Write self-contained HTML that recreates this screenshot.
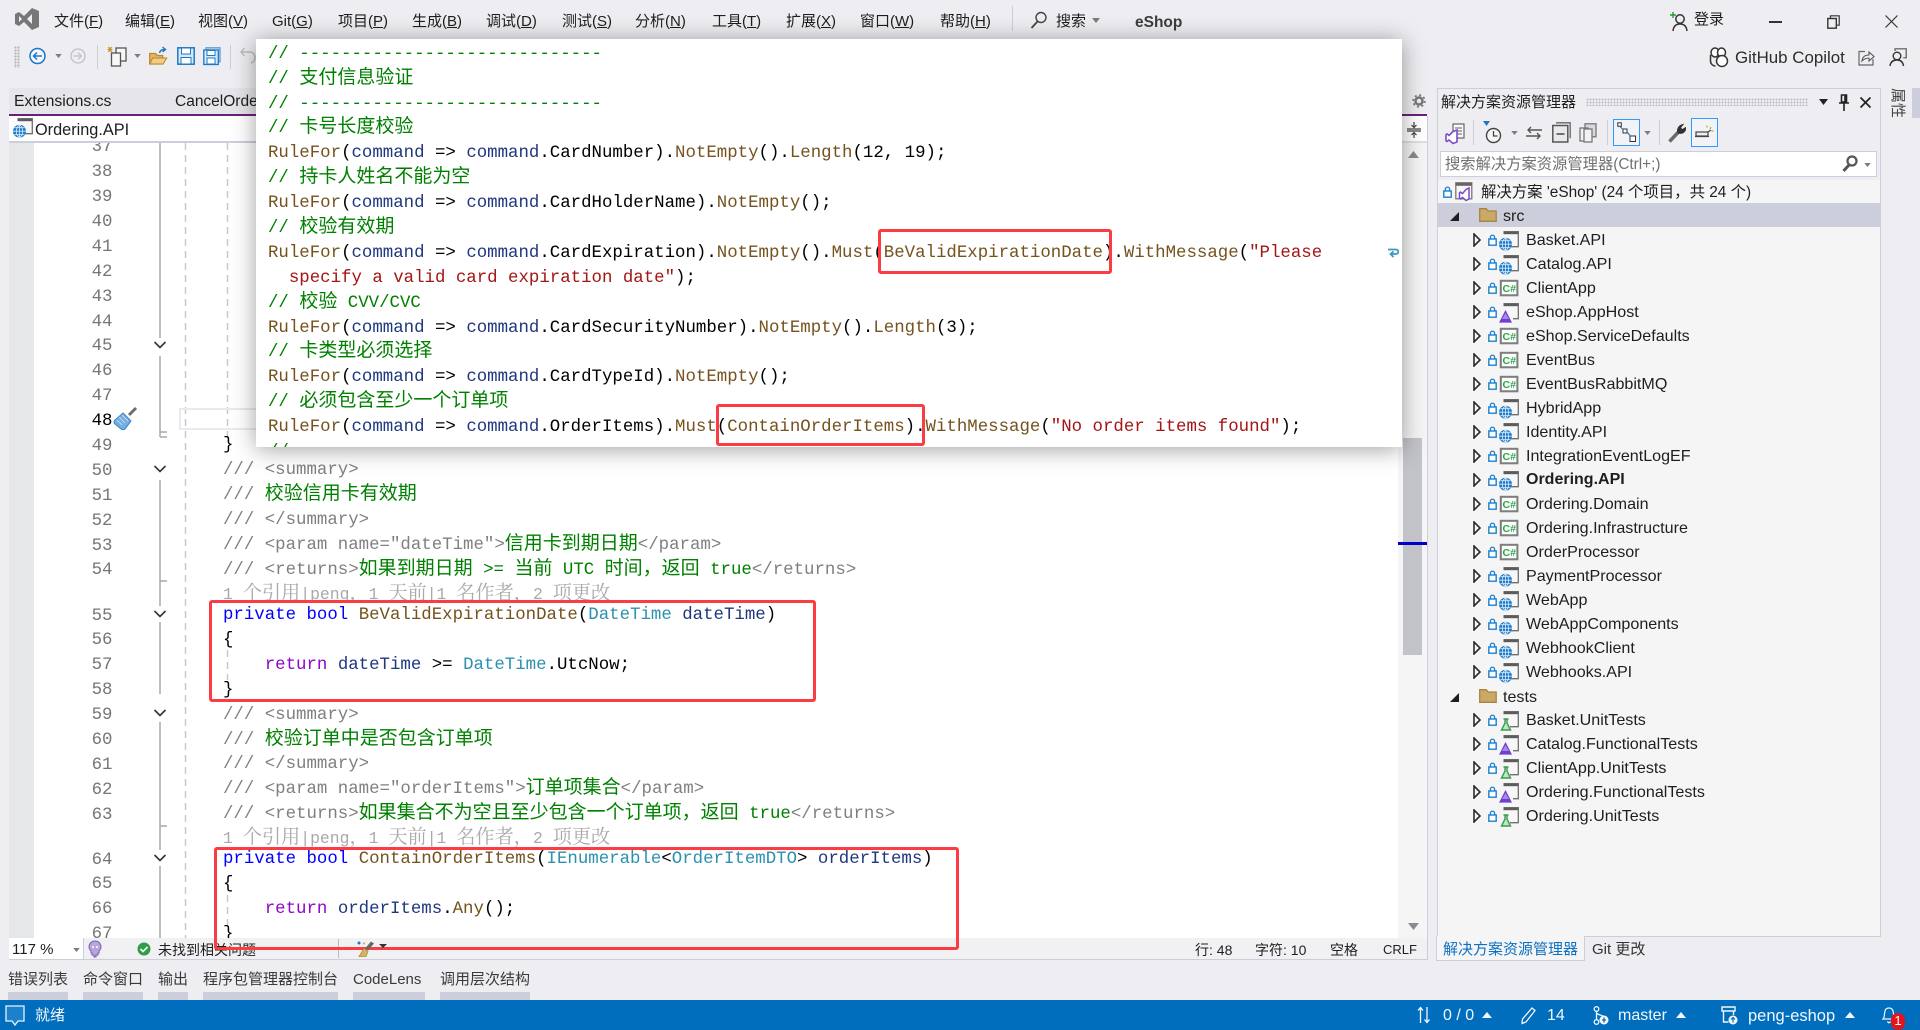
<!DOCTYPE html>
<html lang="zh-CN"><head><meta charset="utf-8"><title>eShop - Visual Studio</title>
<style>
*{box-sizing:border-box}
html,body{margin:0;padding:0;width:1920px;height:1030px;overflow:hidden;background:#eeeef2}
body{position:relative;font-family:"Liberation Sans","Noto Sans CJK SC",sans-serif;color:#1e1e1e;font-size:15px}
.a{position:absolute;white-space:pre}
.t{position:absolute;white-space:pre;line-height:20px;height:20px}
svg{position:absolute;overflow:visible}
u{text-decoration:underline}
#layer{position:absolute;left:0;top:0;width:1920px;height:1030px;clip-path:inset(143px 0 92px 0)}
.code,.pop{font-family:"Liberation Mono",monospace;font-size:17.4px;color:#000}
.code{position:absolute;left:223px}
.l{height:24.9px;line-height:24.9px;white-space:pre}
.nums{position:absolute;left:60px;width:52.5px;text-align:right;font-family:"Liberation Mono",monospace;font-size:17.4px;color:#767676}
i{font-style:normal}
.c{font-family:"Noto Sans CJK SC",sans-serif;font-size:19px;color:#008000;line-height:0}
.cm{color:#008000}.x{color:#808080}.k{color:#0000ff}.m{color:#74531f}.ty{color:#2b91af}.p{color:#1f377f}.r{color:#8f08c4}.s{color:#a31515}
.lens{position:absolute;left:223px;height:20px;line-height:20px;white-space:pre;font-family:"Liberation Mono",monospace;font-size:16.4px;color:#a9a9a9}
.lens i{font-family:"Noto Serif CJK SC",serif;font-size:19.2px;line-height:0}
#pop{position:absolute;left:256px;top:39px;width:1146px;height:408px;background:#fff;box-shadow:0 2px 22px rgba(0,0,0,.38);overflow:hidden;padding:3.8px 0 0 12px}
.box{position:absolute;border:3px solid #fb3c42;border-radius:3px}
.row{position:absolute;left:1437px;width:443px;height:24px}
.row b,.row span{position:absolute;left:89px;top:2px;line-height:20px;font-size:16.1px;white-space:pre;font-weight:400;color:#1e1e1e}
.row b{font-weight:700;font-size:16px}
.row .ar{left:36px;top:5px}.row .lk{left:51px;top:6px}.row .ic{left:62px;top:3px;width:20px;height:20px}
.row .fd{left:42px;top:5px}
.bt{position:absolute;top:970px;font-size:15px;line-height:20px;white-space:pre;color:#3a3a3a}
.bb{position:absolute;top:992px;height:8px;background:#cccedb}
.sb{position:absolute;top:1006px;line-height:20px;color:#f2f7fb;font-size:16px;white-space:pre}
</style></head>
<body>
<svg width="0" height="0" style="position:absolute">
<defs>
<symbol id="arw" viewBox="0 0 8 14"><path d="M1 1l6 6-6 6z" fill="#f5f5f5" stroke="#2c2c2c" stroke-width="1.6"/></symbol>
<symbol id="lock" viewBox="0 0 9 12"><path d="M2.4 5V3.2a2.1 2.1 0 0 1 4.2 0V5" fill="none" stroke="#1b80d0" stroke-width="1.3"/><rect x=".8" y="5" width="7.4" height="6.2" fill="#fff" stroke="#1b80d0" stroke-width="1.4"/></symbol>
<symbol id="web" viewBox="0 0 20 20"><path d="M4.5 .7h14.8v15H12" fill="#f7f7f7" stroke="#707070" stroke-width="1.3"/><rect x="4.500" y=".7" width="14.800" height="2.500" fill="#5c5c5c"/><circle cx="6.500" cy="13.200" r="6.500" fill="#1d7bc9"/><path d="M0 13.200h13M6.500 6.700v13M1.500 9.700h10M1.500 16.700h10M6.500 6.700c-4.200 3.200-4.200 9.800 0 13M6.500 6.700c4.200 3.200 4.200 9.800 0 13" fill="none" stroke="#d8ecfa" stroke-width=".8"/></symbol>
<symbol id="cs" viewBox="0 0 20 20"><rect x="1.800" y="1.800" width="16.600" height="14.500" fill="#fbfbfb" stroke="#7d7d7d" stroke-width="2"/><text x="3.500" y="13" font-family="Liberation Sans" font-weight="700" font-size="10.500" fill="#2ea84f">C#</text></symbol>
<symbol id="tri" viewBox="0 0 20 20"><path d="M4.500 .7h14.800v15H14" fill="#f7f7f7" stroke="#707070" stroke-width="1.300"/><rect x="4.500" y=".7" width="14.800" height="2.500" fill="#5c5c5c"/><path d="M6.500 7L13 19.600H0z" fill="#6e3fd0"/><path d="M6.500 10L10 16H3z" fill="#a78ae6"/></symbol>
<symbol id="tst" viewBox="0 0 20 20"><path d="M4.500 .7h14.800v15H11" fill="#f7f7f7" stroke="#707070" stroke-width="1.300"/><rect x="4.500" y=".7" width="14.800" height="2.500" fill="#5c5c5c"/><path d="M4.500 8h5M6 8v4L2.500 19h9L8 12V8" fill="#bfe3c5" stroke="#3a9b54" stroke-width="1.400"/></symbol>
<symbol id="fld" viewBox="0 0 18 14"><path d="M.7 13.300V.7h6.500l2 2.300h8v10.300z" fill="#c9a868" stroke="#a8853f" stroke-width="1.300"/></symbol>
<symbol id="dt" viewBox="0 0 8 5"><path d="M0 0h8L4 5z" fill="#7c7c7c"/></symbol>
</defs></svg>

<!-- Title bar -->
<svg style="left:15px;top:8px" width="24" height="22" viewBox="0 0 24 22"><path d="M0 6l4-2 5 4 8-8 7 3v16l-7 3-8-8-5 4-4-2zM4 8v6l3-3zM17 6l-5 5 5 5z" fill="#777" fill-rule="evenodd"/></svg>
<div class="t" style="left:54px;top:12px">文件(<u>F</u>)</div>
<div class="t" style="left:125px;top:12px">编辑(<u>E</u>)</div>
<div class="t" style="left:198px;top:12px">视图(<u>V</u>)</div>
<div class="t" style="left:272px;top:12px">Git(<u>G</u>)</div>
<div class="t" style="left:338px;top:12px">项目(<u>P</u>)</div>
<div class="t" style="left:412px;top:12px">生成(<u>B</u>)</div>
<div class="t" style="left:486px;top:12px">调试(<u>D</u>)</div>
<div class="t" style="left:562px;top:12px">测试(<u>S</u>)</div>
<div class="t" style="left:635px;top:12px">分析(<u>N</u>)</div>
<div class="t" style="left:712px;top:12px">工具(<u>T</u>)</div>
<div class="t" style="left:786px;top:12px">扩展(<u>X</u>)</div>
<div class="t" style="left:860px;top:12px">窗口(<u>W</u>)</div>
<div class="t" style="left:940px;top:12px">帮助(<u>H</u>)</div>
<div class="a" style="left:1012px;top:6px;width:1px;height:25px;background:#ccced6"></div>
<svg style="left:1030px;top:11px" width="18" height="18" viewBox="0 0 18 18"><circle cx="11" cy="6.500" r="5" fill="none" stroke="#444" stroke-width="1.400"/><path d="M7.500 10.500L1.500 17" stroke="#444" stroke-width="1.800"/></svg>
<div class="t" style="left:1056px;top:12px">搜索</div>
<svg style="left:1092px;top:18px" width="8" height="5"><use href="#dt"/></svg>
<div class="t" style="left:1135px;top:13px;font-weight:700;font-size:15.500px;color:#3c3c3c">eShop</div>
<svg style="left:1669px;top:10px" width="20" height="22" viewBox="0 0 20 22"><path d="M1 5h6M4 2v6" stroke="#2a9a2a" stroke-width="1.400"/><circle cx="11" cy="9" r="4.200" fill="none" stroke="#333" stroke-width="1.500"/><path d="M4 21c.5-5 3-7 7-7s6.500 2 7 7" fill="none" stroke="#333" stroke-width="1.500"/></svg>
<div class="t" style="left:1694px;top:10px">登录</div>
<div class="a" style="left:1769px;top:21px;width:13px;height:1.500px;background:#333"></div>
<svg style="left:1827px;top:15px" width="13" height="14" viewBox="0 0 13 14"><path d="M3.500 3V.8h8.700v9.400H9.500" fill="none" stroke="#333" stroke-width="1.200"/><rect x=".8" y="3.500" width="8.500" height="9.700" fill="none" stroke="#333" stroke-width="1.400"/></svg>
<svg style="left:1885px;top:15px" width="13" height="13" viewBox="0 0 13 13"><path d="M.5.5l12 12M12.500.5l-12 12" stroke="#333" stroke-width="1.200"/></svg>

<!-- Toolbar -->
<div class="a" style="left:14px;top:46px;width:6px;height:22px;background-image:radial-gradient(#b4b4b8 1px,transparent 1.200px);background-size:3px 3px"></div>
<svg style="left:29px;top:47px" width="17" height="18" viewBox="0 0 17 18"><circle cx="8.500" cy="9" r="7.500" fill="#f4f6f9" stroke="#1b78c8" stroke-width="1.500"/><path d="M13 9H5M8 5.500L4.500 9 8 12.500" fill="none" stroke="#1b78c8" stroke-width="1.500"/></svg>
<svg style="left:55px;top:54px" width="7" height="4"><use href="#dt"/></svg>
<svg style="left:70px;top:48px" width="16" height="16" viewBox="0 0 16 16"><circle cx="8" cy="8" r="7" fill="none" stroke="#bfbfc4" stroke-width="1.300"/><path d="M3.500 8h8M8 4.500L11.500 8 8 11.500" fill="none" stroke="#bfbfc4" stroke-width="1.200"/></svg>
<div class="a" style="left:97px;top:45px;width:1px;height:24px;background:#ccced6"></div>
<svg style="left:107px;top:46px" width="20" height="21" viewBox="0 0 20 21"><path d="M3 1v5M.5 3.500h5M1 1l4 5M5 1L1 6" stroke="#c9932d" stroke-width="1"/><rect x="9" y="2" width="10" height="13" fill="#f7f7f7" stroke="#555" stroke-width="1.300"/><rect x="4.500" y="7" width="9" height="13" fill="#f7f7f7" stroke="#555" stroke-width="1.300"/></svg>
<svg style="left:134px;top:54px" width="7" height="4"><use href="#dt"/></svg>
<svg style="left:149px;top:47px" width="18" height="18" viewBox="0 0 18 18"><path d="M.7 17V6.500h6l1.500 2h5.500V17z" fill="#e4b560" stroke="#b8882c" stroke-width="1.200"/><path d="M.7 17l3-6h14l-3.500 6z" fill="#efcd86" stroke="#b8882c" stroke-width="1"/><path d="M10.500 6c.5-2.500 2.500-3.500 5-3.500M13.500 0l3 2.500-3 2.500" fill="none" stroke="#1b78c8" stroke-width="1.400"/></svg>
<svg style="left:177px;top:47px" width="18" height="18" viewBox="0 0 18 18"><rect x=".8" y=".8" width="16.400" height="16.400" fill="#d9e9f7" stroke="#1b78c8" stroke-width="1.500"/><rect x="4.500" y="1" width="9" height="6" fill="#fff" stroke="#1b78c8"/><rect x="4" y="10.500" width="10" height="6.500" fill="#fff" stroke="#1b78c8"/></svg>
<svg style="left:203px;top:47px" width="18" height="18" viewBox="0 0 18 18"><rect x="3" y=".8" width="14" height="14" fill="#cfe2f2" stroke="#5a9bd1" stroke-width="1.300"/><rect x=".8" y="3" width="14.500" height="14.500" fill="#d9e9f7" stroke="#1b78c8" stroke-width="1.300"/><rect x="4" y="3.500" width="8" height="5" fill="#fff" stroke="#1b78c8"/><rect x="4" y="11" width="8" height="6" fill="#fff" stroke="#1b78c8"/></svg>
<div class="a" style="left:230px;top:45px;width:1px;height:24px;background:#ccced6"></div>
<svg style="left:240px;top:47px" width="16" height="17" viewBox="0 0 16 17"><path d="M1 5h8c4 0 6 2.500 6 5.500 0 2.500-1.500 4.500-4 5.500M4.500 1L1 5l3.500 4" fill="none" stroke="#bdbdc2" stroke-width="1.500"/></svg>
<!-- right top -->
<svg style="left:1709px;top:47px" width="21" height="21" viewBox="0 0 21 21"><ellipse cx="6" cy="5.500" rx="4" ry="4.500" fill="#fff" stroke="#333" stroke-width="1.500"/><ellipse cx="12.500" cy="5.500" rx="4" ry="4.500" fill="#fff" stroke="#333" stroke-width="1.500"/><path d="M1.500 8v6c0 3 2.500 5 5 5" fill="none" stroke="#333" stroke-width="1.500"/><circle cx="13" cy="14" r="5.500" fill="#fff" stroke="#333" stroke-width="1.500"/></svg>
<div class="a" style="left:1735px;top:47px;font-size:16.900px;line-height:22px;color:#2c2c2c">GitHub Copilot</div>
<svg style="left:1858px;top:49px" width="17" height="17" viewBox="0 0 17 17"><path d="M7 2.500H1v13.500h14v-6" fill="none" stroke="#666" stroke-width="1.200"/><path d="M4 12c.5-4 3-6 7-6V3l5 4.500-5 4.500V9c-3 0-5 1-7 3z" fill="#f3f3f6" stroke="#555" stroke-width="1.100"/></svg>
<svg style="left:1889px;top:48px" width="18" height="19" viewBox="0 0 18 19"><path d="M6 3V.8h11.200v9h-3" fill="none" stroke="#555" stroke-width="1.200"/><circle cx="8" cy="8" r="3.800" fill="none" stroke="#333" stroke-width="1.400"/><path d="M1 18c.5-4 3-6 7-6s6 2 6.500 6" fill="none" stroke="#333" stroke-width="1.400"/></svg>

<!-- Document well -->
<div class="a" style="left:9px;top:88px;width:250px;height:26px;background:#e5e5ea"></div>
<div class="t" style="left:14px;top:92px;font-size:15.800px">Extensions.cs</div>
<div class="t" style="left:175px;top:92px;font-size:15.500px">CancelOrde</div>
<div class="a" style="left:9px;top:114px;width:1418px;height:2.500px;background:#68217a"></div>
<div class="a" style="left:9px;top:116px;width:1418px;height:25px;background:#fff"></div>
<div class="a" style="left:9px;top:141px;width:1418px;height:2px;background:#cccedb"></div>
<svg style="left:13px;top:118px" width="20" height="20"><use href="#web"/></svg>
<div class="t" style="left:35px;top:120px;font-size:16.300px">Ordering.API</div>
<svg style="left:1411px;top:93px" width="16" height="16" viewBox="0 0 16 16"><circle cx="8" cy="8" r="3.500" fill="none" stroke="#777" stroke-width="2.500"/><circle cx="8" cy="8" r="5.800" fill="none" stroke="#777" stroke-width="1.800" stroke-dasharray="2 2.550"/></svg>
<svg style="left:1407px;top:122px" width="14" height="16" viewBox="0 0 14 16"><path d="M0 7h14M0 9h14" stroke="#444" stroke-width="1.200"/><path d="M7 0v5M7 11v5M4.500 3L7 5.500 9.500 3M4.500 13L7 10.500 9.500 13" fill="none" stroke="#444" stroke-width="1.200"/></svg>
<div class="a" style="left:1398px;top:141px;width:29px;height:2px;background:#e0e0e4"></div>

<!-- Editor -->
<div class="a" style="left:9px;top:143px;width:25px;height:795px;background:#e6e7e8"></div>
<div class="a" style="left:34px;top:143px;width:1364px;height:795px;background:#fff"></div>
<div class="a" style="left:1398px;top:143px;width:29px;height:795px;background:#f5f5f5"></div>
<div class="a" style="left:1427px;top:116px;width:1px;height:844px;background:#cccedb"></div>
<svg style="left:1408px;top:151px" width="11" height="7"><path d="M0 7L5.500 0 11 7z" fill="#8a8a92"/></svg>
<svg style="left:1408px;top:923px" width="11" height="7"><path d="M0 0L5.500 7 11 0z" fill="#8a8a92"/></svg>
<div class="a" style="left:1403px;top:438px;width:19px;height:217px;background:#c2c3c9"></div>
<div class="a" style="left:1398px;top:542px;width:29px;height:2.500px;background:#0000c8"></div>

<div id="layer">
<svg style="left:0;top:0" width="1400" height="1030">
<g stroke="#c9c9c9" stroke-width="1.500" stroke-dasharray="7 5" fill="none"><path d="M185.500 143V938M227.500 143V438M227.500 650V680M227.500 895V925"/></g>
<g stroke="#a9a9a9" stroke-width="1.500" fill="none"><path d="M160 143V338M160 356V432h7M160 437v-5M160 437h7M160 480V581h7M160 581V606M160 622V694M160 722V826M160 826h7M160 826V850M160 866V938"/></g>
<g stroke="#333" stroke-width="1.600" fill="none"><path d="M154.500 342l5.500 5.500 5.500-5.500M154.500 466l5.500 5.500 5.500-5.500M154.500 611l5.500 5.500 5.500-5.500M154.500 710l5.500 5.500 5.500-5.500M154.500 855l5.500 5.500 5.500-5.500"/></g>
</svg>
<div class="a" style="left:179px;top:408px;width:90px;height:22px;border:2px solid #e9e9f1;border-right:0"></div>
<div class="nums" style="top:136.350px"><div class="l">37</div><div class="l">38</div><div class="l">39</div><div class="l">40</div><div class="l">41</div><div class="l">42</div><div class="l">43</div><div class="l">44</div><div class="l">45</div><div class="l">46</div><div class="l">47</div><div class="l" style="color:#000">48</div><div class="l">49</div><div class="l">50</div><div class="l">51</div><div class="l">52</div><div class="l">53</div><div class="l">54</div></div>
<div class="nums" style="top:604.550px"><div class="l">55</div><div class="l">56</div><div class="l">57</div><div class="l">58</div><div class="l">59</div><div class="l">60</div><div class="l">61</div><div class="l">62</div><div class="l">63</div></div>
<div class="nums" style="top:848.550px"><div class="l">64</div><div class="l">65</div><div class="l">66</div><div class="l">67</div></div>
<div class="code" style="top:434.350px">
<div class="l">}</div>
<div class="l"><i class="x">/// &lt;summary&gt;</i></div>
<div class="l"><i class="x">/// </i><i class="c">校验信用卡有效期</i></div>
<div class="l"><i class="x">/// &lt;/summary&gt;</i></div>
<div class="l"><i class="x">/// &lt;param name="dateTime"&gt;</i><i class="c">信用卡到期日期</i><i class="x">&lt;/param&gt;</i></div>
<div class="l"><i class="x">/// &lt;returns&gt;</i><i class="c">如果到期日期</i><i class="cm"> &gt;= </i><i class="c">当前</i><i class="cm"> UTC </i><i class="c">时间，返回</i><i class="cm"> true</i><i class="x">&lt;/returns&gt;</i></div>
</div>
<div class="lens" style="top:584.500px">1 <i>个引用</i>|peng<i>，</i>1 <i>天前</i>|1 <i>名作者，</i>2 <i>项更改</i></div>
<div class="code" style="top:604.050px">
<div class="l"><i class="k">private</i> <i class="k">bool</i> <i class="m">BeValidExpirationDate</i>(<i class="ty">DateTime</i> <i class="p">dateTime</i>)</div>
<div class="l">{</div>
<div class="l">    <i class="r">return</i> <i class="p">dateTime</i> &gt;= <i class="ty">DateTime</i>.UtcNow;</div>
<div class="l">}</div>
<div class="l"><i class="x">/// &lt;summary&gt;</i></div>
<div class="l"><i class="x">/// </i><i class="c">校验订单中是否包含订单项</i></div>
<div class="l"><i class="x">/// &lt;/summary&gt;</i></div>
<div class="l"><i class="x">/// &lt;param name="orderItems"&gt;</i><i class="c">订单项集合</i><i class="x">&lt;/param&gt;</i></div>
<div class="l"><i class="x">/// &lt;returns&gt;</i><i class="c">如果集合不为空且至少包含一个订单项，返回</i><i class="cm"> true</i><i class="x">&lt;/returns&gt;</i></div>
</div>
<div class="lens" style="top:828.500px">1 <i>个引用</i>|peng<i>，</i>1 <i>天前</i>|1 <i>名作者，</i>2 <i>项更改</i></div>
<div class="code" style="top:848.050px">
<div class="l"><i class="k">private</i> <i class="k">bool</i> <i class="m">ContainOrderItems</i>(<i class="ty">IEnumerable</i>&lt;<i class="ty">OrderItemDTO</i>&gt; <i class="p">orderItems</i>)</div>
<div class="l">{</div>
<div class="l">    <i class="r">return</i> <i class="p">orderItems</i>.<i class="m">Any</i>();</div>
<div class="l">}</div>
</div>
</div>
<svg style="left:114px;top:407px" width="24" height="24" viewBox="0 0 24 24"><path d="M22 1l-7 7" stroke="#6e6e6e" stroke-width="3"/><path d="M9 6l8 8-6 8a3 3 0 0 1-4 0l-6-5a2.500 2.500 0 0 1 0-4z" fill="#74ade2" stroke="#3f83c2" stroke-width="1"/><path d="M5 10l6 6M8 8l6 6M3 13l5 5" stroke="#cfe3f5" stroke-width=".8"/></svg>

<!-- Popup -->
<div id="pop" class="pop">
<div class="l"><i class="cm">// -----------------------------</i></div>
<div class="l"><i class="cm">// </i><i class="c">支付信息验证</i></div>
<div class="l"><i class="cm">// -----------------------------</i></div>
<div class="l"><i class="cm">// </i><i class="c">卡号长度校验</i></div>
<div class="l"><i class="m">RuleFor</i>(<i class="p">command</i> =&gt; <i class="p">command</i>.CardNumber).<i class="m">NotEmpty</i>().<i class="m">Length</i>(12, 19);</div>
<div class="l"><i class="cm">// </i><i class="c">持卡人姓名不能为空</i></div>
<div class="l"><i class="m">RuleFor</i>(<i class="p">command</i> =&gt; <i class="p">command</i>.CardHolderName).<i class="m">NotEmpty</i>();</div>
<div class="l"><i class="cm">// </i><i class="c">校验有效期</i></div>
<div class="l"><i class="m">RuleFor</i>(<i class="p">command</i> =&gt; <i class="p">command</i>.CardExpiration).<i class="m">NotEmpty</i>().<i class="m">Must</i>(<i class="m">BeValidExpirationDate</i>).<i class="m">WithMessage</i>(<i class="s">"Please</i></div>
<div class="l"><i class="s">  specify a valid card expiration date"</i>);</div>
<div class="l"><i class="cm">// </i><i class="c">校验</i><i class="cm"> CVV/CVC</i></div>
<div class="l"><i class="m">RuleFor</i>(<i class="p">command</i> =&gt; <i class="p">command</i>.CardSecurityNumber).<i class="m">NotEmpty</i>().<i class="m">Length</i>(3);</div>
<div class="l"><i class="cm">// </i><i class="c">卡类型必须选择</i></div>
<div class="l"><i class="m">RuleFor</i>(<i class="p">command</i> =&gt; <i class="p">command</i>.CardTypeId).<i class="m">NotEmpty</i>();</div>
<div class="l"><i class="cm">// </i><i class="c">必须包含至少一个订单项</i></div>
<div class="l"><i class="m">RuleFor</i>(<i class="p">command</i> =&gt; <i class="p">command</i>.OrderItems).<i class="m">Must</i>(<i class="m">ContainOrderItems</i>).<i class="m">WithMessage</i>(<i class="s">"No order items found"</i>);</div>
<div class="l"><i class="cm">//</i></div>
</div>
<svg style="left:1387px;top:248px" width="13" height="11" viewBox="0 0 13 11"><path d="M1 1.500h8c3 0 3 4.500 0 4.500H4M6.500 3.500L3.500 6l3 3" fill="none" stroke="#3b9ac0" stroke-width="1.800"/></svg>

<!-- Editor status -->
<div class="a" style="left:9px;top:938px;width:1418px;height:22px;background:#f1f1f4;border-bottom:1px solid #cccedb"></div>
<div class="a" style="left:9px;top:938px;width:75px;height:22px;background:#fff;border-right:1px solid #cccedb;border-bottom:1px solid #cccedb"></div>
<div class="t" style="left:12px;top:940px;font-size:15px">117 %</div>
<svg style="left:73px;top:948px" width="7" height="4"><use href="#dt"/></svg>
<svg style="left:88px;top:940px" width="15" height="18" viewBox="0 0 15 18"><path d="M7 1c-4 0-6 3-6 6 0 2 1 3 2 4v2h1v2h2v2h2v-2h2v-2h1v-2c1-1 2-2 2-4 0-3-2-6-6-6z" fill="#b8a5dc" stroke="#7b5db5"/><path d="M5 6v2M9 6v2" stroke="#fff" stroke-width="1.500"/></svg>
<svg style="left:137px;top:942px" width="14" height="14" viewBox="0 0 14 14"><circle cx="7" cy="7" r="6.500" fill="#2f9e44"/><path d="M3.500 7l2.500 2.500 4.500-4.500" fill="none" stroke="#fff" stroke-width="1.600"/></svg>
<div class="t" style="left:158px;top:940px;font-size:14px">未找到相关问题</div>
<div class="a" style="left:338px;top:939px;width:1px;height:19px;background:#b9b9c0"></div>
<div class="t" style="left:1195px;top:940px;font-size:14px">行: 48</div>
<div class="t" style="left:1255px;top:940px;font-size:14px">字符: 10</div>
<div class="t" style="left:1330px;top:940px;font-size:14px">空格</div>
<div class="t" style="left:1383px;top:940px;font-size:13px">CRLF</div>

<!-- Red annotation boxes -->
<div class="box" style="left:878px;top:229px;width:234px;height:45px"></div>
<div class="box" style="left:716px;top:404px;width:209px;height:42px"></div>
<div class="box" style="left:209px;top:600px;width:607px;height:102px"></div>
<div class="box" style="left:214px;top:847px;width:745px;height:103px"></div>
<svg style="left:356px;top:940px" width="20" height="18" viewBox="0 0 20 17"><path d="M15 1l3 2-6 7-3-2z" fill="#666"/><path d="M8 8l4 3-2 5H3z" fill="#d8b362" stroke="#b08c3a" stroke-width=".8"/><circle cx="3" cy="2.500" r="1.500" fill="#1b78c8"/><circle cx="8" cy="3" r="1" fill="#e0a030"/></svg>
<svg style="left:379px;top:944px" width="8" height="4"><path d="M0 0h8L4 4z" fill="#333"/></svg>

<!-- Solution Explorer -->
<div class="a" style="left:1437px;top:88px;width:444px;height:849px;background:#f5f5f5;border:1px solid #cccedb"></div>
<div class="a" style="left:1438px;top:89px;width:442px;height:91px;background:#eeeef2"></div>
<div class="t" style="left:1441px;top:93px">解决方案资源管理器</div>
<div class="a" style="left:1586px;top:98px;width:222px;height:8px;background-image:radial-gradient(#bcbcc4 .9px,transparent 1.100px);background-size:3px 3px"></div>
<svg style="left:1819px;top:99px" width="9" height="6"><path d="M0 0h9L4.500 6z" fill="#222"/></svg>
<svg style="left:1839px;top:94px" width="10" height="17" viewBox="0 0 10 17"><path d="M2.500 1h5v7h-5zM0 9h10M5 9v8M6 1v7" fill="none" stroke="#222" stroke-width="1.600"/></svg>
<svg style="left:1860px;top:97px" width="11" height="11" viewBox="0 0 11 11"><path d="M.5.5l10 10M10.500.5l-10 10" stroke="#222" stroke-width="1.700"/></svg>
<!-- SE toolbar -->
<svg style="left:1445px;top:123px" width="20" height="21" viewBox="0 0 20 21"><rect x="8" y="1" width="11" height="14" fill="#f7f7f7" stroke="#666" stroke-width="1.200"/><path d="M10 5h7M10 8h7M10 11h7" stroke="#666"/><path d="M12 7v12l-4 1.500-4-3.500-2 1.500-1-.8v-6l1-.8 2 1.500L8 8.500z" fill="#fff" stroke="#7b4cc4" stroke-width="1.600"/></svg>
<div class="a" style="left:1473px;top:120px;width:1px;height:25px;background:#ccced6"></div>
<svg style="left:1483px;top:121px" width="18" height="23" viewBox="0 0 18 23"><path d="M0 0h7L3.500 5z" fill="#1b78c8"/><circle cx="10.500" cy="14.500" r="7" fill="#f7f7f7" stroke="#444" stroke-width="1.400"/><path d="M10.500 10v5h4" fill="none" stroke="#444" stroke-width="1.300"/></svg>
<svg style="left:1511px;top:131px" width="7" height="4"><use href="#dt"/></svg>
<svg style="left:1526px;top:126px" width="16" height="14" viewBox="0 0 16 14"><path d="M16 4H2M5 1L2 4l3 3M0 10h14M11 7l3 3-3 3" fill="none" stroke="#555" stroke-width="1.400"/></svg>
<svg style="left:1552px;top:122px" width="19" height="21" viewBox="0 0 19 21"><path d="M4 .8h14.200v15.500" fill="none" stroke="#666" stroke-width="1.300"/><rect x=".8" y="3.500" width="15" height="16.500" fill="#e9e9ed" stroke="#555" stroke-width="1.500"/><path d="M4.500 12h8" stroke="#444" stroke-width="1.500"/></svg>
<svg style="left:1579px;top:123px" width="18" height="20" viewBox="0 0 18 20"><rect x="6" y=".8" width="11" height="13" fill="#d8d8de" stroke="#777" stroke-width="1.300"/><rect x="1" y="5" width="8" height="13" fill="#f2f2f4" stroke="#777" stroke-width="1.300"/><rect x="5" y="6" width="8" height="13" fill="#f2f2f4" stroke="#777" stroke-width="1.300"/></svg>
<div class="a" style="left:1607px;top:120px;width:1px;height:25px;background:#ccced6"></div>
<div class="a" style="left:1613px;top:119px;width:27px;height:27px;border:1px solid #3399ff;background:#f2f3f7"></div>
<svg style="left:1617px;top:122px" width="20" height="21" viewBox="0 0 20 21"><rect x=".8" y=".8" width="3.500" height="3.500" fill="#fff" stroke="#333"/><rect x="6" y="7" width="4" height="4" fill="#fff" stroke="#333"/><rect x="13" y="14" width="5.500" height="5.500" fill="#fff" stroke="#333"/><path d="M3 4.500L6 7.500M10 10l3.500 4" stroke="#1b78c8" stroke-width="1.200"/></svg>
<svg style="left:1644px;top:131px" width="7" height="4"><use href="#dt"/></svg>
<div class="a" style="left:1659px;top:120px;width:1px;height:25px;background:#ccced6"></div>
<svg style="left:1668px;top:123px" width="19" height="20" viewBox="0 0 19 20"><path d="M1.500 18.500L10 9.500" stroke="#6a6a6a" stroke-width="3.500"/><path d="M10 10c-1.500-3.500.5-7.500 5-8.500l-2.500 3.200 1.500 2 3.500-2c.5 3.500-2.500 6.800-7.500 5.300z" fill="#333" stroke="#333" stroke-width="1"/></svg>
<div class="a" style="left:1691px;top:118px;width:27px;height:29px;border:1px solid #3399ff;background:#f2f3f7"></div>
<svg style="left:1695px;top:124px" width="20" height="15" viewBox="0 0 20 15"><rect x="1" y="8" width="12" height="4" fill="#eee" stroke="#444" stroke-width="1.200"/><path d="M0 12.500h14M13 8l3-2" stroke="#444" stroke-width="1.200"/><path d="M12 1.500v2M16 3l-1 2M18.500 7h-2" stroke="#d09a2c" stroke-width="1.200"/></svg>
<!-- search -->
<div class="a" style="left:1440px;top:151px;width:437px;height:26px;background:#fff;border:1px solid #cccedb"></div>
<div class="t" style="left:1445px;top:155px;color:#717171;font-size:15.300px">搜索解决方案资源管理器(Ctrl+;)</div>
<svg style="left:1842px;top:155px" width="16" height="18" viewBox="0 0 16 18"><circle cx="10" cy="6" r="4.500" fill="none" stroke="#555" stroke-width="2.200"/><path d="M7 10L1.500 16" stroke="#555" stroke-width="3"/></svg>
<svg style="left:1864px;top:163px" width="7" height="4"><use href="#dt"/></svg>
<!-- solution row -->
<svg style="left:1443px;top:186px" width="9" height="12"><use href="#lock"/></svg>
<svg style="left:1455px;top:182px" width="19" height="20" viewBox="0 0 19 20"><rect x=".8" y=".8" width="16" height="16" fill="#f7f7f7" stroke="#777" stroke-width="1.300"/><rect x=".8" y=".8" width="16" height="3" fill="#666"/><path d="M14 6v11l-3 1.500-3.500-3-2 1.500-1-.7v-5.500l1-.7 2 1.500L11 7.500z" fill="#fff" stroke="#7b4cc4" stroke-width="1.500"/></svg>
<div class="t" style="left:1481px;top:183px;font-size:15.400px">解决方案 'eShop' (24 个项目，共 24 个)</div>
<!-- tree -->
<div class="row" style="top:203px;background:#cccedb"><svg style="left:13px;top:9px" width="9" height="9"><path d="M0 9L9 0v9z" fill="#1e1e1e"/></svg><svg class="fd" width="18" height="14"><use href="#fld"/></svg><span style="left:66px;top:3px">src</span></div>
<div class="row" style="top:228px"><svg class="ar" width="8" height="14"><use href="#arw"/></svg><svg class="lk" width="9" height="12"><use href="#lock"/></svg><svg class="ic"><use href="#web"/></svg><span>Basket.API</span></div>
<div class="row" style="top:252px"><svg class="ar" width="8" height="14"><use href="#arw"/></svg><svg class="lk" width="9" height="12"><use href="#lock"/></svg><svg class="ic"><use href="#web"/></svg><span>Catalog.API</span></div>
<div class="row" style="top:276px"><svg class="ar" width="8" height="14"><use href="#arw"/></svg><svg class="lk" width="9" height="12"><use href="#lock"/></svg><svg class="ic"><use href="#cs"/></svg><span>ClientApp</span></div>
<div class="row" style="top:300px"><svg class="ar" width="8" height="14"><use href="#arw"/></svg><svg class="lk" width="9" height="12"><use href="#lock"/></svg><svg class="ic"><use href="#tri"/></svg><span>eShop.AppHost</span></div>
<div class="row" style="top:324px"><svg class="ar" width="8" height="14"><use href="#arw"/></svg><svg class="lk" width="9" height="12"><use href="#lock"/></svg><svg class="ic"><use href="#cs"/></svg><span>eShop.ServiceDefaults</span></div>
<div class="row" style="top:348px"><svg class="ar" width="8" height="14"><use href="#arw"/></svg><svg class="lk" width="9" height="12"><use href="#lock"/></svg><svg class="ic"><use href="#cs"/></svg><span>EventBus</span></div>
<div class="row" style="top:372px"><svg class="ar" width="8" height="14"><use href="#arw"/></svg><svg class="lk" width="9" height="12"><use href="#lock"/></svg><svg class="ic"><use href="#cs"/></svg><span>EventBusRabbitMQ</span></div>
<div class="row" style="top:396px"><svg class="ar" width="8" height="14"><use href="#arw"/></svg><svg class="lk" width="9" height="12"><use href="#lock"/></svg><svg class="ic"><use href="#web"/></svg><span>HybridApp</span></div>
<div class="row" style="top:420px"><svg class="ar" width="8" height="14"><use href="#arw"/></svg><svg class="lk" width="9" height="12"><use href="#lock"/></svg><svg class="ic"><use href="#web"/></svg><span>Identity.API</span></div>
<div class="row" style="top:444px"><svg class="ar" width="8" height="14"><use href="#arw"/></svg><svg class="lk" width="9" height="12"><use href="#lock"/></svg><svg class="ic"><use href="#cs"/></svg><span>IntegrationEventLogEF</span></div>
<div class="row" style="top:468px"><svg class="ar" width="8" height="14"><use href="#arw"/></svg><svg class="lk" width="9" height="12"><use href="#lock"/></svg><svg class="ic"><use href="#web"/></svg><b>Ordering.API</b></div>
<div class="row" style="top:492px"><svg class="ar" width="8" height="14"><use href="#arw"/></svg><svg class="lk" width="9" height="12"><use href="#lock"/></svg><svg class="ic"><use href="#cs"/></svg><span>Ordering.Domain</span></div>
<div class="row" style="top:516px"><svg class="ar" width="8" height="14"><use href="#arw"/></svg><svg class="lk" width="9" height="12"><use href="#lock"/></svg><svg class="ic"><use href="#cs"/></svg><span>Ordering.Infrastructure</span></div>
<div class="row" style="top:540px"><svg class="ar" width="8" height="14"><use href="#arw"/></svg><svg class="lk" width="9" height="12"><use href="#lock"/></svg><svg class="ic"><use href="#cs"/></svg><span>OrderProcessor</span></div>
<div class="row" style="top:564px"><svg class="ar" width="8" height="14"><use href="#arw"/></svg><svg class="lk" width="9" height="12"><use href="#lock"/></svg><svg class="ic"><use href="#web"/></svg><span>PaymentProcessor</span></div>
<div class="row" style="top:588px"><svg class="ar" width="8" height="14"><use href="#arw"/></svg><svg class="lk" width="9" height="12"><use href="#lock"/></svg><svg class="ic"><use href="#web"/></svg><span>WebApp</span></div>
<div class="row" style="top:612px"><svg class="ar" width="8" height="14"><use href="#arw"/></svg><svg class="lk" width="9" height="12"><use href="#lock"/></svg><svg class="ic"><use href="#web"/></svg><span>WebAppComponents</span></div>
<div class="row" style="top:636px"><svg class="ar" width="8" height="14"><use href="#arw"/></svg><svg class="lk" width="9" height="12"><use href="#lock"/></svg><svg class="ic"><use href="#web"/></svg><span>WebhookClient</span></div>
<div class="row" style="top:660px"><svg class="ar" width="8" height="14"><use href="#arw"/></svg><svg class="lk" width="9" height="12"><use href="#lock"/></svg><svg class="ic"><use href="#web"/></svg><span>Webhooks.API</span></div>
<div class="row" style="top:684px"><svg style="left:13px;top:9px" width="9" height="9"><path d="M0 9L9 0v9z" fill="#1e1e1e"/></svg><svg class="fd" width="18" height="14"><use href="#fld"/></svg><span style="left:66px;top:3px">tests</span></div>
<div class="row" style="top:708px"><svg class="ar" width="8" height="14"><use href="#arw"/></svg><svg class="lk" width="9" height="12"><use href="#lock"/></svg><svg class="ic"><use href="#tst"/></svg><span>Basket.UnitTests</span></div>
<div class="row" style="top:732px"><svg class="ar" width="8" height="14"><use href="#arw"/></svg><svg class="lk" width="9" height="12"><use href="#lock"/></svg><svg class="ic"><use href="#tri"/></svg><span>Catalog.FunctionalTests</span></div>
<div class="row" style="top:756px"><svg class="ar" width="8" height="14"><use href="#arw"/></svg><svg class="lk" width="9" height="12"><use href="#lock"/></svg><svg class="ic"><use href="#tst"/></svg><span>ClientApp.UnitTests</span></div>
<div class="row" style="top:780px"><svg class="ar" width="8" height="14"><use href="#arw"/></svg><svg class="lk" width="9" height="12"><use href="#lock"/></svg><svg class="ic"><use href="#tri"/></svg><span>Ordering.FunctionalTests</span></div>
<div class="row" style="top:804px"><svg class="ar" width="8" height="14"><use href="#arw"/></svg><svg class="lk" width="9" height="12"><use href="#lock"/></svg><svg class="ic"><use href="#tst"/></svg><span>Ordering.UnitTests</span></div>
<!-- SE tabs -->
<div class="a" style="left:1436px;top:936px;width:149px;height:25px;background:#f5f5f5;border:1px solid #cccedb;border-top:0"></div>
<div class="t" style="left:1443px;top:940px;color:#0e70c0;font-size:15px">解决方案资源管理器</div>
<div class="t" style="left:1592px;top:940px;color:#333;font-size:15px">Git 更改</div>
<!-- properties strip -->
<div class="a" style="left:1912px;top:88px;width:8px;height:30px;background:#cccedb"></div>
<div class="a" style="left:1889px;top:88px;width:16px;writing-mode:vertical-rl;text-orientation:sideways;font-size:15px;line-height:16px;color:#444">属性</div>

<!-- Bottom tool tabs -->
<div class="bt" style="left:8px">错误列表</div><div class="bb" style="left:8px;width:60px"></div>
<div class="bt" style="left:83px">命令窗口</div><div class="bb" style="left:83px;width:60px"></div>
<div class="bt" style="left:158px">输出</div><div class="bb" style="left:158px;width:30px"></div>
<div class="bt" style="left:203px">程序包管理器控制台</div><div class="bb" style="left:203px;width:135px"></div>
<div class="bt" style="left:353px">CodeLens</div><div class="bb" style="left:353px;width:72px"></div>
<div class="bt" style="left:440px">调用层次结构</div><div class="bb" style="left:440px;width:90px"></div>

<!-- Status bar -->
<div class="a" style="left:0;top:1000px;width:1920px;height:30px;background:#006ebd"></div>
<svg style="left:5px;top:1005px" width="20" height="22" viewBox="0 0 20 22"><path d="M1 1h18v15h-6l-3 4-3-4H1z" fill="#1c80cb" stroke="#e8f2fa" stroke-width="1.300"/></svg>
<div class="sb" style="left:35px;font-size:15px">就绪</div>
<svg style="left:1417px;top:1006px" width="14" height="18" viewBox="0 0 14 18"><path d="M3.500 17V2M1 4.500L3.500 1.500 6 4.500M10 1v15M7.500 13.500l2.500 3 2.500-3" fill="none" stroke="#f2f7fb" stroke-width="1.300"/></svg>
<div class="sb" style="left:1443px">0 / 0</div>
<svg style="left:1482px;top:1012px" width="10" height="6"><path d="M0 6L5 0l5 6z" fill="#f2f7fb"/></svg>
<svg style="left:1521px;top:1007px" width="15" height="17" viewBox="0 0 15 17"><path d="M11 1l3 2.500L5 15l-4 1.500.5-4.500z" fill="none" stroke="#f2f7fb" stroke-width="1.300"/></svg>
<div class="sb" style="left:1547px">14</div>
<svg style="left:1593px;top:1006px" width="18" height="19" viewBox="0 0 18 19"><circle cx="3.500" cy="3" r="2.300" fill="none" stroke="#f2f7fb" stroke-width="1.300"/><circle cx="3.500" cy="16" r="2.300" fill="none" stroke="#f2f7fb" stroke-width="1.300"/><path d="M3.500 5.500v8M3.500 7c2 2.500 5 1.500 7 3.500" fill="none" stroke="#f2f7fb" stroke-width="1.300"/><circle cx="11" cy="14" r="4.500" fill="#f2f7fb"/><path d="M11 11.500v5M9 14h4" stroke="#006ebd" stroke-width="1.300"/></svg>
<div class="sb" style="left:1618px">master</div>
<svg style="left:1676px;top:1012px" width="10" height="6"><path d="M0 6L5 0l5 6z" fill="#f2f7fb"/></svg>
<svg style="left:1721px;top:1006px" width="18" height="19" viewBox="0 0 18 19"><path d="M1 1h13v4H1zM2.500 5v11h5M12.500 5v4" fill="none" stroke="#f2f7fb" stroke-width="1.400"/><circle cx="12" cy="14" r="4.500" fill="#f2f7fb"/><path d="M12 16.500v-5M10 13.500l2-2 2 2" fill="none" stroke="#006ebd" stroke-width="1.200"/></svg>
<div class="sb" style="left:1748px;font-size:16.500px">peng-eshop</div>
<svg style="left:1845px;top:1012px" width="10" height="6"><path d="M0 6L5 0l5 6z" fill="#f2f7fb"/></svg>
<svg style="left:1882px;top:1006px" width="14" height="18" viewBox="0 0 14 18"><path d="M1 13c2-2 1-5 2-8 .5-2 2-3 4-3s3.500 1 4 3c1 3 0 6 2 8zM5.500 15.500c.5 1.500 2.500 1.500 3 0" fill="none" stroke="#f2f7fb" stroke-width="1.200"/></svg>
<div class="a" style="left:1891px;top:1013px;width:14px;height:17px;border-radius:8px;background:#e3141b;color:#fff;font-size:13px;line-height:16px;text-align:center">1</div>
</body></html>
